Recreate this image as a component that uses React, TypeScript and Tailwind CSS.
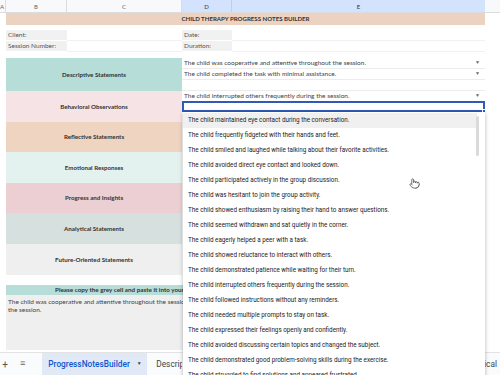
import { Pointer } from "lucide-react";

const options = [
    "The child maintained eye contact during the conversation.",
    "The child frequently fidgeted with their hands and feet.",
    "The child smiled and laughed while talking about their favorite activities.",
    "The child avoided direct eye contact and looked down.",
    "The child participated actively in the group discussion.",
    "The child was hesitant to join the group activity.",
    "The child showed enthusiasm by raising their hand to answer questions.",
    "The child seemed withdrawn and sat quietly in the corner.",
    "The child eagerly helped a peer with a task.",
    "The child showed reluctance to interact with others.",
    "The child demonstrated patience while waiting for their turn.",
    "The child interrupted others frequently during the session.",
    "The child followed instructions without any reminders.",
    "The child needed multiple prompts to stay on task.",
    "The child expressed their feelings openly and confidently.",
    "The child avoided discussing certain topics and changed the subject.",
    "The child demonstrated good problem-solving skills during the exercise.",
    "The child struggled to find solutions and appeared frustrated.",
];

const sections = [
    { label: "Reflective Statements", bg: "bg-[#efd4c1]", h: "h-[30px]" },
    { label: "Emotional Responses", bg: "bg-[#e3f2ef]", h: "h-[31px]" },
    { label: "Progress and Insights", bg: "bg-[#ebcfd3]", h: "h-[30px]" },
    { label: "Analytical Statements", bg: "bg-[#d6e0df]", h: "h-[31px]" },
    { label: "Future-Oriented Statements", bg: "bg-[#efefef]", h: "h-[31px]" },
];

function Arrow() {
    return <span className="text-[5px] text-[#666] mr-[5px]">▼</span>;
}

function Label({ text, bg, h }: { text: string; bg: string; h: string }) {
    return (
        <div className={`flex ${h}`}>
            <div className="w-[6px]" />
            <div className={`w-[176px] ${bg} flex items-center justify-center font-bold text-[6.2px] text-[#333]`}>
                {text}
            </div>
        </div>
    );
}

function ValueRow({ text, arrow }: { text?: string; arrow?: boolean }) {
    return (
        <div className="h-[11px] w-[303px] flex items-center justify-between pl-[2px] border-b border-[#ececec] text-[6.5px] text-[#444]">
            <span>{text}</span>
            {arrow && <Arrow />}
        </div>
    );
}

export default function App() {
    return (
        <div className="relative w-[500px] h-[375px] overflow-hidden bg-white font-['Lato',sans-serif] text-[#333]">
            {/* column headers */}
            <div className="flex h-[13px] bg-[#f8f9fa] border-b border-[#dadce0] text-[6px] text-[#666]">
                <div className="w-[6px] border-r border-[#dadce0] flex items-center">A</div>
                <div className="w-[61px] border-r border-[#dadce0] flex items-center justify-center">B</div>
                <div className="w-[115px] border-r border-[#dadce0] flex items-center justify-center">C</div>
                <div className="w-[50px] bg-[#d3e3fd] border-r border-[#c0cfe8] flex items-center justify-center text-[#333]">D</div>
                <div className="w-[253px] bg-[#d3e3fd] flex items-center justify-center text-[#333]">E</div>
            </div>

            {/* title */}
            <div className="flex h-[12px]">
                <div className="w-[6px]" />
                <div className="w-[479px] bg-[#ecd3c1] flex items-center justify-center font-bold text-[6.1px] text-[#333]">
                    CHILD THERAPY PROGRESS NOTES BUILDER
                </div>
            </div>

            <div className="h-[5px]" />

            {/* client info */}
            {[["Client:", "Date:"], ["Session Number:", "Duration:"]].map(([a, b]) => (
                <div key={a} className="flex h-[11px] text-[6.5px] text-[#555]">
                    <div className="w-[6px]" />
                    <div className="w-[61px] bg-[#f1f1f1] flex items-center pl-[2px] border-b border-white">{a}</div>
                    <div className="w-[115px] border-b border-[#f1f1f1]" />
                    <div className="w-[50px] bg-[#f1f1f1] flex items-center pl-[2px] border-b border-white">{b}</div>
                    <div className="w-[253px] border-b border-[#f1f1f1]" />
                </div>
            ))}

            <div className="h-[6px]" />

            {/* descriptive */}
            <div className="flex h-[33px]">
                <div className="w-[6px]" />
                <div className="w-[176px] bg-[#b6ddd8] flex items-center justify-center font-bold text-[6.2px] text-[#333]">
                    Descriptive Statements
                </div>
                <div className="flex flex-col">
                    <ValueRow text="The child was cooperative and attentive throughout the session." arrow />
                    <ValueRow text="The child completed the task with minimal assistance." arrow />
                    <ValueRow />
                </div>
            </div>

            {/* behavioral */}
            <div className="flex h-[31px]">
                <div className="w-[6px]" />
                <div className="w-[176px] bg-[#f6e3e6] flex items-center justify-center font-bold text-[6.2px] text-[#333]">
                    Behavioral Observations
                </div>
                <div className="flex flex-col">
                    <div className="h-[10px] w-[303px] flex items-center justify-between pl-[2px] text-[6.5px] text-[#444]">
                        <span>The child interrupted others frequently during the session.</span>
                        <Arrow />
                    </div>
                    <div className="relative h-[11px] w-[303px] border-2 border-[#2f5bb7]">
                        <div className="absolute -right-[3px] -bottom-[3px] w-[4px] h-[4px] bg-[#2f5bb7] border border-white" />
                    </div>
                </div>
            </div>

            {sections.map((s) => (
                <Label key={s.label} text={s.label} bg={s.bg} h={s.h} />
            ))}

            <div className="h-[10px]" />

            {/* output */}
            <div className="flex h-[10px]">
                <div className="w-[6px]" />
                <div className="w-[479px] bg-[#b6ddd8] flex items-center pl-[49px] font-bold text-[6.3px] text-[#333]">
                    <span className="w-[128px] whitespace-nowrap overflow-hidden">
                        Please copy the grey cell and paste it into your notes.
                    </span>
                </div>
            </div>
            <div className="flex h-[55px]">
                <div className="w-[6px]" />
                <div className="w-[479px] bg-[#efefef] pl-[2px] pt-[3px] text-[6.5px] leading-[8px] text-[#444]">
                    <div className="w-[175px] whitespace-nowrap overflow-hidden">
                        The child was cooperative and attentive throughout the session.
                    </div>
                    <div>the session.</div>
                </div>
            </div>

            {/* sheet tabs */}
            <div className="absolute left-0 bottom-0 w-[500px] h-[23px] bg-[#f9fbfd] border-t border-[#e3e3e3] flex items-center font-['Roboto',sans-serif] text-[8.3px] text-[#444]">
                <span className="w-[10px] text-center text-[10px] text-[#555]">+</span>
                <span className="ml-[10px] text-[9px] text-[#666]">≡</span>
                <div className="ml-[17px] h-[23px] w-[105px] bg-[#e1e9f7] flex items-center pl-[6px] font-medium text-[#0b57d0]">
                    ProgressNotesBuilder
                    <span className="ml-[7px] text-[5px] text-[#444]">▼</span>
                </div>
                <span className="ml-[9px] w-[26px] whitespace-nowrap overflow-hidden">Descriptive</span>
                <span className="absolute right-[3px]">ical</span>
            </div>

            {/* dropdown */}
            <div className="absolute left-[183px] top-[112px] w-[302px] h-[270px] bg-white shadow-[0_1px_4px_rgba(0,0,0,0.3)] font-['Roboto',sans-serif] text-[6.3px] text-[#222]">
                <div className="absolute right-[6px] top-[4px] w-[3px] h-[40px] rounded bg-[#dadada]" />
                <div className="pt-[1px]">
                    {options.map((o, i) => (
                        <div
                            key={o}
                            className={`h-[15px] w-[294px] flex items-center pl-[5px] whitespace-nowrap ${i === 0 ? "bg-[#f0f0f0]" : ""}`}
                        >
                            {o}
                        </div>
                    ))}
                </div>
                <Pointer className="absolute left-[226px] top-[66px] w-[11px] h-[11px] text-[#333] fill-white" strokeWidth={1.5} />
            </div>
        </div>
    );
}
